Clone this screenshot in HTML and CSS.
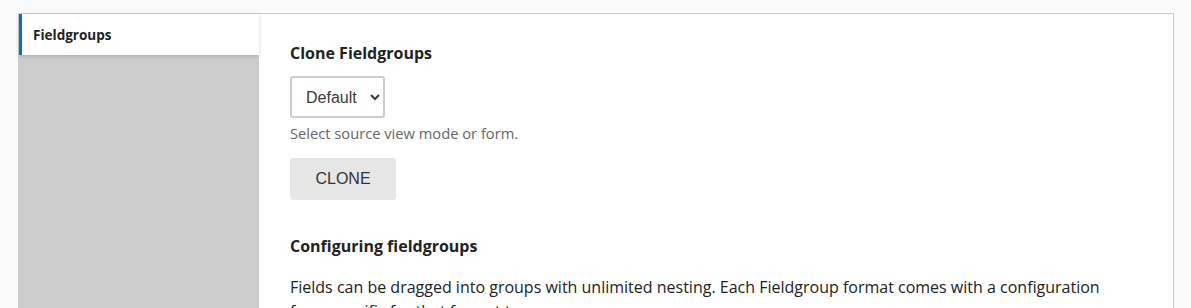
FILE: index.html
```html
<!DOCTYPE html>
<html>
<head>
<meta charset="utf-8">
<link rel="stylesheet" href="styles.css">
</head>
<body>
<div class="vtabs">
  <div class="tab-col">
    <ul class="tab-list">
      <li class="tab selected">Fieldgroups</li>
    </ul>
    <div class="tab-fill"></div>
  </div>
  <div class="pane">
    <h3 class="heading">Clone Fieldgroups</h3>
    <select class="select">
      <option>Default</option>
    </select>
    <div class="desc">Select source view mode or form.</div>
    <button class="button">CLONE</button>
    <h3 class="heading second">Configuring fieldgroups</h3>
    <p class="text">Fields can be dragged into groups with unlimited nesting. Each Fieldgroup format comes with a configuration form specific for that format type.</p>
  </div>
</div>
</body>
</html>
```
FILE: styles.css
```css
html, body {
  margin: 0;
  background: #fafafa;
  overflow: hidden;
}
body {
  padding: 13px 17px 0 18px;
  font-family: "Open Sans", "Liberation Sans", sans-serif;
  color: #222;
}
.vtabs {
  display: flex;
  border: 1px solid #ccc;
  border-left-width: 0;
  background: #fff;
  height: 320px;
}
.tab-col {
  width: 241px;
  flex: none;
  display: flex;
  flex-direction: column;
  background: #ccc;
}
.tab-list {
  list-style: none;
  margin: 0;
  padding: 0 0 0 1px;
  background: #ccc;
}
.tab {
  height: 41px;
  box-sizing: border-box;
  background: #fff;
  border-left: 3px solid #0074bd;
  padding-left: 11px;
  font-size: 13.5px;
  font-weight: 700;
  line-height: 42px;
  color: #222;
  box-shadow: 0 1px 4px rgba(0,0,0,0.18);
  position: relative;
}
.pane {
  flex: 1;
  padding: 27px 43px 0 31px;
}
.heading {
  margin: 0;
  font-size: 16px;
  font-weight: 700;
  line-height: 24px;
  color: #222;
}
.select {
  display: block;
  margin-top: 11px;
  height: 42px;
  padding: 0 10px 0 10px;
  border: 2px solid #ccc;
  border-radius: 3px;
  background: #fff;
  font-family: "Liberation Sans", Arial, sans-serif;
  font-size: 16px;
  color: #3a3a3a;
}
.desc {
  margin-top: 6px;
  font-size: 14.7px;
  line-height: 18px;
  color: #666;
}
.button {
  display: block;
  margin-top: 16px;
  width: 106px;
  height: 42px;
  border: none;
  border-radius: 3px;
  background: #e6e6e6;
  font-family: "Liberation Sans", Arial, sans-serif;
  font-size: 16px;
  color: #333;
}
.second {
  margin-top: 34px;
}
.text {
  margin: 17px 0 0;
  font-size: 16px;
  line-height: 24px;
  color: #222;
}
```
